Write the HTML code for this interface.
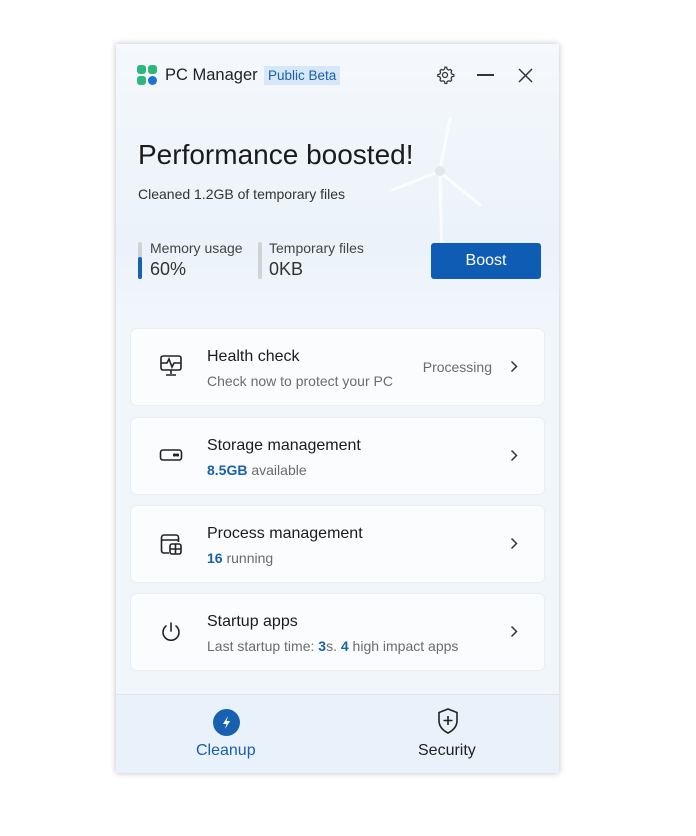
<!DOCTYPE html>
<html><head><meta charset="utf-8">
<style>
*{margin:0;padding:0;box-sizing:border-box}
body{width:696px;height:836px;background:#fff;font-family:"Liberation Sans",sans-serif;position:relative;overflow:hidden;color:#1b1b1b}
.win{position:absolute;left:116px;top:44px;width:443px;height:729px;background:#f1f6fb;box-shadow:0 0 6px rgba(0,0,0,.25);overflow:hidden}
.hero{position:absolute;left:0;top:0;width:443px;height:270px;background:linear-gradient(180deg,#f5f8fc 0%,#ebf2f9 75%,#f1f6fb 100%)}
.abs{position:absolute}
.card{position:absolute;left:14px;width:415px;height:78px;background:#fbfcfe;border-radius:7px;border:1px solid #e9eef4}
.t{position:absolute;left:76px;top:19px;font-size:16px;color:#1b1b1b}
.s{position:absolute;left:76px;top:44px;font-size:14px;color:#6b6b6b}
.s b{color:#1762b0}
.chev{position:absolute;right:26px;top:31px}
.ic{position:absolute;left:28px;top:26px}
.nav{position:absolute;left:0;top:650px;width:443px;height:79px;background:#e9f2fb;border-top:1px solid #dde6ef}
</style></head><body>
<div class="win">
 <div class="hero">
  <svg class="abs" style="left:250px;top:60px" width="150" height="210" viewBox="0 0 150 210"><g stroke="#fff" stroke-width="3" fill="none" opacity=".75" stroke-linecap="round"><line x1="74" y1="66" x2="84" y2="14"/><line x1="72" y1="68" x2="26" y2="86"/><line x1="76" y1="70" x2="114" y2="101"/><line x1="74" y1="70" x2="76" y2="160"/></g><circle cx="74" cy="67" r="5" fill="#dfe7ef"/></svg>
 </div>
 <svg class="abs" style="left:21px;top:21px" width="20" height="20" viewBox="0 0 20 20"><rect x="0" y="0" width="9" height="9" rx="3" fill="#2fb67a"/><rect x="11" y="0" width="9" height="9" rx="3" fill="#2fb67a"/><rect x="0" y="11" width="9" height="9" rx="3" fill="#2fb67a"/><circle cx="15.5" cy="15.5" r="4.5" fill="#1a73d1"/></svg>
 <div class="abs" style="left:49px;top:22px;font-size:16.5px;color:#222">PC Manager</div>
 <div class="abs" style="left:148px;top:22px;height:19px;padding:0 4px;background:#d6e8f7;font-size:13.5px;color:#1a5fa8;line-height:19px">Public Beta</div>
 <svg class="abs" style="left:319px;top:21px" width="20" height="20" viewBox="0 0 24 24" fill="none" stroke="#333" stroke-width="1.5"><circle cx="12" cy="12" r="3"/><path d="M12 2.5l2 .3.6 2.3 1.7 1 2.3-.7 1.4 1.5-.7 2.3 1 1.7 2.3.6v2l-2.3.6-1 1.7.7 2.3-1.4 1.5-2.3-.7-1.7 1-.6 2.3h-2l-.6-2.3-1.7-1-2.3.7-1.4-1.5.7-2.3-1-1.7-2.3-.6v-2l2.3-.6 1-1.7-.7-2.3 1.4-1.5 2.3.7 1.7-1 .6-2.3z"/></svg>
 <div class="abs" style="left:361px;top:30px;width:17px;height:1.5px;background:#333"></div>
 <svg class="abs" style="left:402px;top:24px" width="15" height="15" viewBox="0 0 15 15" stroke="#333" stroke-width="1.5"><line x1="1" y1="1" x2="14" y2="14"/><line x1="14" y1="1" x2="1" y2="14"/></svg>
 <div class="abs" style="left:22px;top:95px;font-size:28px;color:#1b1b1b">Performance boosted!</div>
 <div class="abs" style="left:22px;top:142px;font-size:14px;color:#333">Cleaned 1.2GB of temporary files</div>
 <div class="abs" style="left:22px;top:198px;width:4px;height:37px;background:#d0d3d6;border-radius:2px"><div style="position:absolute;bottom:0;width:4px;height:22px;background:#1762b0;border-radius:2px"></div></div>
 <div class="abs" style="left:34px;top:196px;font-size:14px;color:#444">Memory usage</div>
 <div class="abs" style="left:34px;top:215px;font-size:18px;color:#333">60%</div>
 <div class="abs" style="left:142px;top:198px;width:4px;height:37px;background:#d0d3d6;border-radius:2px"></div>
 <div class="abs" style="left:153px;top:196px;font-size:14px;color:#444">Temporary files</div>
 <div class="abs" style="left:153px;top:215px;font-size:18px;color:#333">0KB</div>
 <div class="abs" style="left:315px;top:199px;width:110px;height:36px;background:#0f5cb5;border-radius:3px;color:#fff;font-size:16px;text-align:center;line-height:36px">Boost</div>

 <div class="card" style="top:284px">
  <svg class="ic" width="24" height="22" viewBox="0 0 24 22" fill="none" stroke="#222" stroke-width="1.6"><rect x="2" y="1" width="20" height="14" rx="2"/><path d="M2 8h6l2-4 3 8 2-4h7"/><path d="M12 15v4M7 20h10"/></svg>
  <div class="t">Health check</div><div class="s">Check now to protect your PC</div>
  <div class="abs" style="right:52px;top:30px;font-size:14px;color:#6b6b6b">Processing</div>
  <svg class="chev" width="8" height="13" viewBox="0 0 8 13" fill="none" stroke="#333" stroke-width="1.5"><path d="M1.5 1.5l5 5-5 5"/></svg>
 </div>
 <div class="card" style="top:373px">
  <svg class="ic" style="top:30px" width="24" height="14" viewBox="0 0 24 14" fill="none" stroke="#222" stroke-width="1.6"><rect x="1.5" y="2" width="21" height="10" rx="2.5"/><circle cx="15.5" cy="7" r=".8" fill="#222"/><circle cx="18.5" cy="7" r=".8" fill="#222"/></svg>
  <div class="t">Storage management</div><div class="s"><b>8.5GB</b> available</div>
  <svg class="chev" width="8" height="13" viewBox="0 0 8 13" fill="none" stroke="#333" stroke-width="1.5"><path d="M1.5 1.5l5 5-5 5"/></svg>
 </div>
 <div class="card" style="top:461px">
  <svg class="ic" width="24" height="24" viewBox="0 0 24 24" fill="none" stroke="#222" stroke-width="1.6"><path d="M10 21H5a2.5 2.5 0 0 1-2.5-2.5v-13A2.5 2.5 0 0 1 5 3h12a2.5 2.5 0 0 1 2.5 2.5V10"/><path d="M2.5 8h17"/><rect x="11" y="12" width="11" height="10" rx="2"/><path d="M16.5 12v10M11 17h11"/></svg>
  <div class="t">Process management</div><div class="s"><b>16</b> running</div>
  <svg class="chev" width="8" height="13" viewBox="0 0 8 13" fill="none" stroke="#333" stroke-width="1.5"><path d="M1.5 1.5l5 5-5 5"/></svg>
 </div>
 <div class="card" style="top:549px">
  <svg class="ic" width="24" height="24" viewBox="0 0 24 24" fill="none" stroke="#222" stroke-width="1.6" stroke-linecap="round"><path d="M12 3v8"/><path d="M7 6a8 8 0 1 0 10 0"/></svg>
  <div class="t">Startup apps</div><div class="s">Last startup time: <b>3</b>s. <b>4</b> high impact apps</div>
  <svg class="chev" width="8" height="13" viewBox="0 0 8 13" fill="none" stroke="#333" stroke-width="1.5"><path d="M1.5 1.5l5 5-5 5"/></svg>
 </div>

 <div class="nav">
  <svg class="abs" style="left:97px;top:14px" width="27" height="27" viewBox="0 0 27 27"><circle cx="13.5" cy="13.5" r="13.5" fill="#1762b0"/><path d="M15 7l-5 8h3.5l-1.5 5 5-8h-3.5z" fill="#fff"/></svg>
  <div class="abs" style="left:80px;top:47px;font-size:16px;color:#1a5fa8">Cleanup</div>
  <svg class="abs" style="left:320px;top:12px" width="24" height="28" viewBox="0 0 24 28" fill="none" stroke="#222" stroke-width="1.6"><path d="M12 2l9 3.5v8c0 6-4 10-9 12.5C7 23.5 3 19.5 3 13.5v-8z"/><path d="M12 9v9M7.5 13.5h9"/></svg>
  <div class="abs" style="left:302px;top:47px;font-size:16px;color:#222">Security</div>
 </div>
</div>
</body></html>
